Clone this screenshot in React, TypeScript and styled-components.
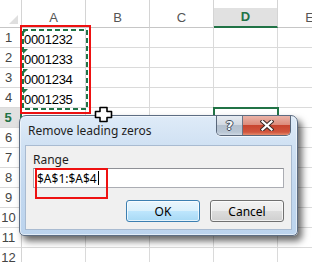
import React from 'react';
import styled, { createGlobalStyle, css } from 'styled-components';

const Global = createGlobalStyle`
  html, body { margin: 0; padding: 0; background: #fff; }
  body { width: 312px; height: 262px; overflow: hidden; }
`;

const Screen = styled.div`
  position: relative;
  width: 312px;
  height: 262px;
  overflow: hidden;
  background: #fff;
`;

const Sheet = styled.div`
  display: grid;
  grid-template-columns: 22px repeat(5, 64px);
  grid-template-rows: 28px repeat(12, 20px);
  font-family: "Liberation Sans", Arial, sans-serif;
  font-size: 13px;
  color: #000;
`;

const Corner = styled.div`
  position: relative;
  box-sizing: border-box;
  border-right: 1px solid #d4d4d4;
  border-bottom: 1px solid #c6c6c6;
  &::after {
    content: "";
    position: absolute;
    right: 3px;
    bottom: 3px;
    width: 9px;
    height: 9px;
    background: #dfdfdf;
    clip-path: polygon(100% 0, 100% 100%, 0 100%);
  }
`;

const ColHeader = styled.div<{ $selected?: boolean }>`
  box-sizing: border-box;
  display: flex;
  align-items: flex-end;
  justify-content: center;
  line-height: 19px;
  color: #555;
  border-right: 1px solid #d4d4d4;
  border-bottom: 1px solid #c6c6c6;
  ${(p) =>
    p.$selected &&
    css`
      background: linear-gradient(to bottom, #fff 0 8px, #e1e1e1 8px);
      color: #217346;
      font-weight: bold;
      border-bottom: 2px solid #217346;
      line-height: 18px;
    `}
`;

const RowHeader = styled.div<{ $selected?: boolean }>`
  box-sizing: border-box;
  display: flex;
  align-items: center;
  justify-content: center;
  padding-right: 4px;
  color: #444;
  border-right: 1px solid #d4d4d4;
  border-bottom: 1px solid #dadada;
  ${(p) =>
    p.$selected &&
    css`
      background: #e1e1e1;
      color: #217346;
      font-weight: bold;
      border-right: 2px solid #217346;
    `}
`;

const Cell = styled.div<{ $flag?: boolean; $active?: boolean }>`
  position: relative;
  box-sizing: border-box;
  display: flex;
  align-items: flex-end;
  padding-left: 2px;
  line-height: 14px;
  letter-spacing: -0.3px;
  border-right: 1px solid #dadada;
  border-bottom: 1px solid #dadada;
  white-space: nowrap;
  ${(p) =>
    p.$flag &&
    css`
      &::before {
        content: "";
        position: absolute;
        left: 1px;
        top: 1px;
        width: 5px;
        height: 5px;
        background: #217346;
        clip-path: polygon(0 0, 100% 0, 0 100%);
      }
    `}
  ${(p) =>
    p.$active &&
    css`
      outline: 2px solid #217346;
      outline-offset: -1px;
    `}
`;

const RedFrame = styled.div<{ $x: number; $y: number; $w: number; $h: number }>`
  position: absolute;
  left: ${(p) => p.$x}px;
  top: ${(p) => p.$y}px;
  width: ${(p) => p.$w}px;
  height: ${(p) => p.$h}px;
  box-sizing: border-box;
  border: 2.5px solid #ee1111;
  pointer-events: none;
`;

const Marquee = styled.svg`
  position: absolute;
  left: 22px;
  top: 29px;
  overflow: visible;
`;

const Cursor = styled.svg`
  position: absolute;
  left: 95px;
  top: 107px;
  overflow: visible;
`;

const Dialog = styled.div`
  position: absolute;
  left: 19px;
  top: 115px;
  width: 279px;
  height: 121px;
  box-sizing: border-box;
  display: flex;
  flex-direction: column;
  border: 1px solid #5d6d83;
  border-radius: 7px 7px 5px 5px;
  background: linear-gradient(to bottom, #dfebf8 0%, #d0e1f3 25%, #c3d8ef 60%, #bcd4ee 100%);
  box-shadow: 4px 5px 7px rgba(0, 0, 0, 0.6), inset 0 0 0 1px rgba(255, 255, 255, 0.55);
  font-family: "Noto Sans", "Open Sans", sans-serif;
  font-size: 12px;
  color: #000;
`;

const TitleBar = styled.div`
  height: 29px;
  display: flex;
  justify-content: space-between;
  align-items: flex-start;
`;

const Title = styled.div`
  padding-left: 8px;
  line-height: 29px;
  color: #1e1e1e;
`;

const Caption = styled.div`
  display: flex;
  margin-right: 6px;
  height: 19px;
  border: 1px solid #59677a;
  border-top: none;
  border-radius: 0 0 5px 5px;
  overflow: hidden;
  box-shadow: 0 1px 0 rgba(255, 255, 255, 0.7);
`;

const CapButton = styled.div<{ $close?: boolean }>`
  width: ${(p) => (p.$close ? 47 : 25)}px;
  display: flex;
  align-items: center;
  justify-content: center;
  background: ${(p) =>
    p.$close
      ? 'linear-gradient(to bottom, #eab3a7 0%, #dd8c7c 45%, #c8452f 50%, #d1563e 85%, #e58d6e 100%)'
      : 'linear-gradient(to bottom, #e6ebf1 0%, #d2d9e2 45%, #b4c0ce 50%, #b9c6d4 85%, #cfd9e4 100%)'};
  & + & {
    border-left: 1px solid #6b7585;
  }
`;

const Panel = styled.div`
  flex: 1;
  margin: 0 5px 5px;
  display: flex;
  flex-direction: column;
  padding: 7px;
  background: #f0f0f0;
  border: 1px solid #a9bbd1;
`;

const Label = styled.div`
  line-height: 14px;
  color: #1e1e1e;
`;

const Input = styled.div`
  margin-top: 1px;
  height: 20px;
  box-sizing: border-box;
  display: flex;
  align-items: center;
  padding-left: 3px;
  background: #fff;
  border: 1px solid #abadb3;
  border-top-color: #8e9096;
`;

const Caret = styled.span`
  display: inline-block;
  width: 1px;
  height: 14px;
  margin-left: 1px;
  background: #000;
`;

const ButtonRow = styled.div`
  margin-top: 12px;
  display: flex;
  justify-content: flex-end;
  gap: 10px;
`;

const Button = styled.div<{ $default?: boolean }>`
  width: 74px;
  height: 22px;
  box-sizing: border-box;
  display: flex;
  align-items: center;
  justify-content: center;
  border-radius: 3px;
  border: 1px solid ${(p) => (p.$default ? '#3c7fb1' : '#707070')};
  background: ${(p) =>
    p.$default
      ? 'linear-gradient(to bottom, #eaf6fd 0%, #d9f0fc 50%, #bee6fd 50%, #a7d9f5 100%)'
      : 'linear-gradient(to bottom, #f2f2f2 0%, #ebebeb 50%, #dddddd 50%, #cfcfcf 100%)'};
  box-shadow: inset 0 0 0 1px rgba(255, 255, 255, 0.7);
  color: #000;
`;

const HelpGlyph = styled.span`
  font-family: "DejaVu Sans", sans-serif;
  font-weight: bold;
  font-size: 13px;
  line-height: 1;
  color: #f4f6f8;
  text-shadow: -1px 0 #3f4a5a, 1px 0 #3f4a5a, 0 -1px #3f4a5a, 0 1px #3f4a5a;
`;

const columns = ['A', 'B', 'C', 'D', 'E'];
const values: Record<number, string> = { 1: '0001232', 2: '0001233', 3: '0001234', 4: '0001235' };

export default function App() {
  const rows = Array.from({ length: 12 }, (_, i) => i + 1);
  return (
    <Screen>
      <Global />
      <Sheet>
        <Corner />
        {columns.map((c) => (
          <ColHeader key={c} $selected={c === 'D'}>
            {c}
          </ColHeader>
        ))}
        {rows.map((r) => (
          <React.Fragment key={r}>
            <RowHeader $selected={r === 5}>{r}</RowHeader>
            {columns.map((c) => (
              <Cell key={c} $flag={c === 'A' && !!values[r]} $active={c === 'D' && r === 5}>
                {c === 'A' ? values[r] ?? '' : ''}
              </Cell>
            ))}
          </React.Fragment>
        ))}
      </Sheet>

      <RedFrame $x={20} $y={25} $w={71} $h={89} />
      <Marquee width="66" height="81" viewBox="0 0 66 81">
        <rect x="1" y="1" width="64" height="79" fill="none" stroke="#217346" strokeWidth="2" strokeDasharray="5 3" />
      </Marquee>

      <Dialog>
        <TitleBar>
          <Title>Remove leading zeros</Title>
          <Caption>
            <CapButton>
              <HelpGlyph>?</HelpGlyph>
            </CapButton>
            <CapButton $close>
              <svg width="14" height="11" viewBox="0 0 14 11">
                <path d="M2.5 1.5 L11.5 9.5 M11.5 1.5 L2.5 9.5" stroke="#3d2a28" strokeWidth="4.2" strokeLinecap="square" />
                <path d="M2.5 1.5 L11.5 9.5 M11.5 1.5 L2.5 9.5" stroke="#fff" strokeWidth="2.2" strokeLinecap="square" />
              </svg>
            </CapButton>
          </Caption>
        </TitleBar>
        <Panel>
          <Label>Range</Label>
          <Input>
            $A$1:$A$4
            <Caret />
          </Input>
          <ButtonRow>
            <Button $default>OK</Button>
            <Button>Cancel</Button>
          </ButtonRow>
        </Panel>
        <RedFrame $x={15} $y={52} $w={73} $h={31} />
      </Dialog>

      <Cursor width="17" height="15" viewBox="0 0 17 15">
        <path
          d="M5 0.5 H12 V4.5 H16.5 V10.5 H12 V14.5 H5 V10.5 H0.5 V4.5 H5 Z"
          fill="#fff"
          stroke="#000"
          strokeWidth="1.6"
          strokeLinejoin="round"
        />
      </Cursor>
    </Screen>
  );
}
